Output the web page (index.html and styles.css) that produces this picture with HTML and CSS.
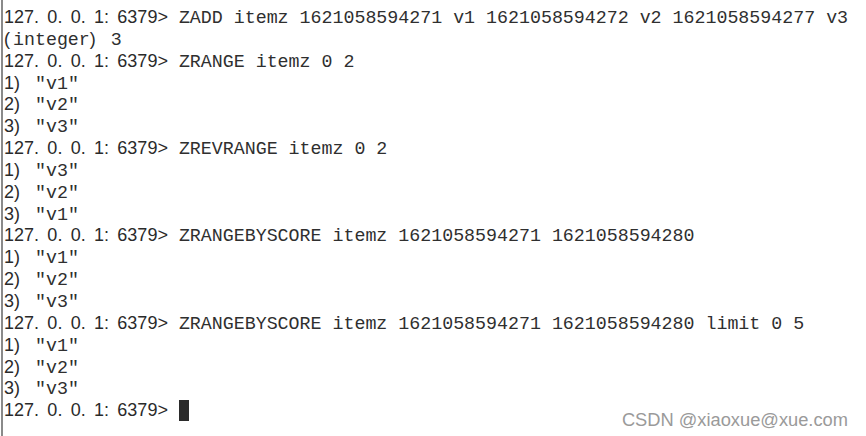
FILE: index.html
```html
<!DOCTYPE html>
<html>
<head>
<meta charset="utf-8">
<link rel="stylesheet" href="styles.css">
</head>
<body>
<div class="term">
  <div class="line"><span class="p">127<span class="d">.</span>0<span class="d">.</span>0<span class="d">.</span>1<span class="d">:</span>6379&gt;</span> ZADD itemz 1621058594271 v1 1621058594272 v2 1621058594277 v3</div>
  <div class="line"><span class="s lp">(</span>integer<span class="s rp">)</span> 3</div>
  <div class="line"><span class="p">127<span class="d">.</span>0<span class="d">.</span>0<span class="d">.</span>1<span class="d">:</span>6379&gt;</span> ZRANGE itemz 0 2</div>
  <div class="line"><span class="n">1)</span> "v1"</div>
  <div class="line"><span class="n">2)</span> "v2"</div>
  <div class="line"><span class="n">3)</span> "v3"</div>
  <div class="line"><span class="p">127<span class="d">.</span>0<span class="d">.</span>0<span class="d">.</span>1<span class="d">:</span>6379&gt;</span> ZREVRANGE itemz 0 2</div>
  <div class="line"><span class="n">1)</span> "v3"</div>
  <div class="line"><span class="n">2)</span> "v2"</div>
  <div class="line"><span class="n">3)</span> "v1"</div>
  <div class="line"><span class="p">127<span class="d">.</span>0<span class="d">.</span>0<span class="d">.</span>1<span class="d">:</span>6379&gt;</span> ZRANGEBYSCORE itemz 1621058594271 1621058594280</div>
  <div class="line"><span class="n">1)</span> "v1"</div>
  <div class="line"><span class="n">2)</span> "v2"</div>
  <div class="line"><span class="n">3)</span> "v3"</div>
  <div class="line"><span class="p">127<span class="d">.</span>0<span class="d">.</span>0<span class="d">.</span>1<span class="d">:</span>6379&gt;</span> ZRANGEBYSCORE itemz 1621058594271 1621058594280 limit 0 5</div>
  <div class="line"><span class="n">1)</span> "v1"</div>
  <div class="line"><span class="n">2)</span> "v2"</div>
  <div class="line"><span class="n">3)</span> "v3"</div>
  <div class="line"><span class="p">127<span class="d">.</span>0<span class="d">.</span>0<span class="d">.</span>1<span class="d">:</span>6379&gt;</span> <span class="cursor"></span></div>
</div>
<div class="mark">CSDN @xiaoxue@xue.com</div>
</body>
</html>
```
FILE: styles.css
```css
html, body {
  margin: 0;
  padding: 0;
  background: #ffffff;
}
body {
  width: 866px;
  height: 436px;
  position: relative;
  overflow: hidden;
}
.term {
  margin-left: 1px;
  border-left: 2px solid #8a8a8a;
  height: 436px;
  box-sizing: border-box;
  padding: 7px 0 0 1px;
  font-family: "Liberation Mono", monospace;
  font-size: 18.3px;
  color: #2f2f2f;
}
.line {
  height: 21.85px;
  line-height: 21.85px;
  white-space: pre;
}
.p, .s, .n {
  font-family: "Liberation Sans", Arial, sans-serif;
  font-size: 18px;
  color: #2a2a2a;
}
.d {
  margin-right: 8.3px;
}
.n {
  margin-right: 4px;
}
.lp {
  margin-right: 3px;
}
.rp {
  margin-right: 4px;
}
.cursor {
  display: inline-block;
  width: 10px;
  height: 21px;
  background: #2b2b2b;
  vertical-align: -5px;
}
.mark {
  position: absolute;
  right: 18px;
  bottom: 5px;
  font-family: "Liberation Sans", Arial, sans-serif;
  font-size: 18.3px;
  color: #9a9a9a;
  text-shadow: 0 0 1px #ffffff;
}
```
